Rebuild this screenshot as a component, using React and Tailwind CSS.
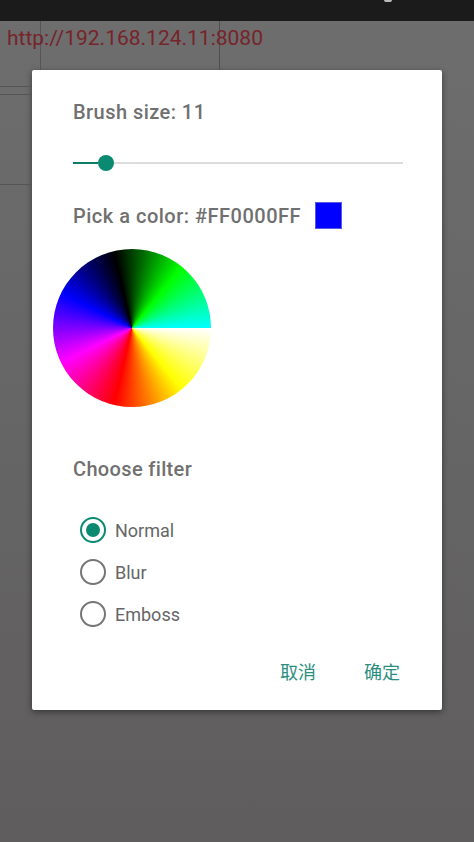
import React from 'react';

const sans = "font-['Roboto','Noto_Sans_CJK_SC',sans-serif]";

// Filter option row
const FilterOption = ({ label, checked }) => (
  <div className="flex h-[42px] items-center pl-[7px]">
    <span
      className={`flex size-[26px] items-center justify-center rounded-full border-2 ${
        checked ? 'border-[#0b8a72]' : 'border-[#757575]'
      }`}
    >
      {checked && <span className="size-[14px] rounded-full bg-[#0b8a72]" />}
    </span>
    <span className="ml-[9px] text-[18px] text-[#666]">{label}</span>
  </div>
);

const App = () => {
  return (
    <div className={`relative flex h-[842px] w-[474px] flex-col overflow-hidden bg-gradient-to-b from-[#6e6e6e] to-[#5f5d5d] ${sans}`}>
      {/* Status bar */}
      <div className="relative h-[21px] shrink-0 bg-[#1b1b1b]">
        <span className="absolute left-[384px] top-0 h-[2px] w-[8px] rounded-b-sm bg-[#bbb]" />
      </div>

      {/* Dimmed canvas behind the dialog */}
      <div className="absolute left-[40px] top-[21px] h-[49px] w-px bg-[#555]" />
      <div className="absolute left-[219px] top-[21px] h-[49px] w-px bg-[#4f4f4f]" />
      <div className="absolute left-0 top-[86px] h-[9px] w-[32px] border-y border-[#555]" />
      <div className="absolute left-0 top-[95px] h-[90px] w-[32px] border-b border-[#555]" />
      <div className="absolute left-[7px] top-[25px] text-[21px] leading-[26px] text-[#76242a]">
        http://192.168.124.11:8080
      </div>

      {/* Dialog */}
      <div className="mx-[32px] mt-[49px] flex h-[640px] flex-col rounded-[2px] bg-white px-[41px] shadow-[0_2px_6px_rgba(0,0,0,0.45)]">
        <p className="mt-[29px] text-[20px] font-medium leading-[26px] tracking-[0.45px] text-[#707070]">Brush size: 11</p>

        {/* Slider */}
        <div className="relative mt-[30px] flex h-[16px] w-[330px] items-center">
          <span className="h-[2px] w-[25px] bg-[#0b7d68]" />
          <span className="size-[16px] rounded-full bg-[#0b8a72]" />
          <span className="h-[2px] flex-1 bg-[#dcdcdc]" />
        </div>

        {/* Colour preview */}
        <div className="mt-[31px] flex h-[28px] items-center">
          <p className="text-[20px] font-medium tracking-[0.5px] text-[#707070]">Pick a color: #FF0000FF</p>
          <span className="mb-[2px] ml-[14px] size-[27px] border border-[#5a5ae0] bg-[#0000ff]" />
        </div>

        {/* Colour wheel */}
        <div className="-ml-[20px] mt-[19px] size-[158px] rounded-full bg-[conic-gradient(from_90deg,#ffffff,#ffff00_51deg,#ff0000_103deg,#ff00ff_154deg,#0000ff_206deg,#000000_257deg,#00ff00_309deg,#00ffff_360deg)]" />

        <p className="mt-[49px] text-[20px] font-medium leading-[26px] tracking-[0.35px] text-[#707070]">Choose filter</p>

        <div className="mt-[27px]">
          <FilterOption label="Normal" checked />
          <FilterOption label="Blur" />
          <FilterOption label="Emboss" />
        </div>

        {/* Actions */}
        <div className="mt-[25px] flex justify-end gap-[48px] pr-[1px] text-[18px] leading-[26px] text-[#2a8f80]">
          <span>取消</span>
          <span>确定</span>
        </div>
      </div>
    </div>
  );
};

export default App;
